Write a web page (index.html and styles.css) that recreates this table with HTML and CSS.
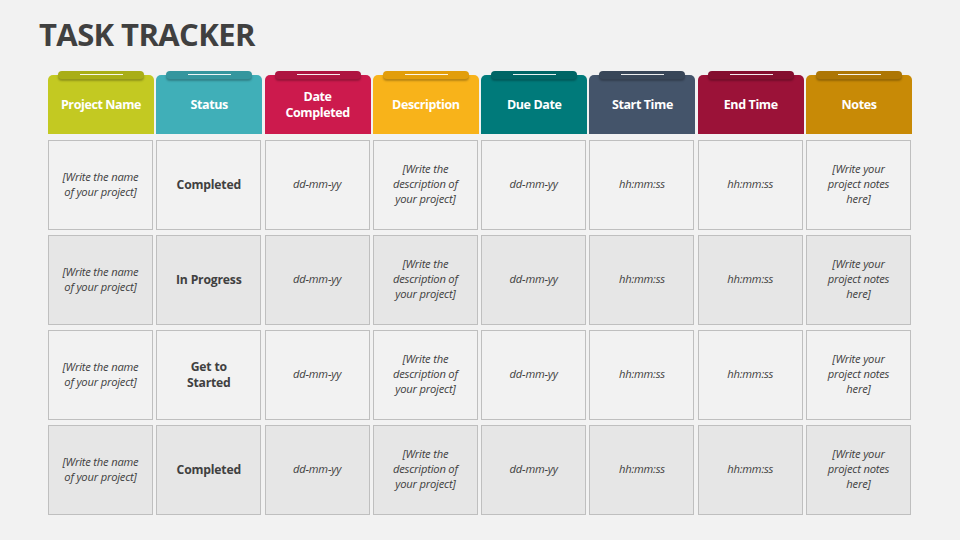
FILE: index.html
```html
<!DOCTYPE html>
<html>
<head>
<meta charset="utf-8">
<link rel="stylesheet" href="styles.css">
</head>
<body>
<h1 class="title">TASK TRACKER</h1>
<div class="table">
  <div class="head c1"><span class="tab"></span>Project Name</div>
  <div class="head c2"><span class="tab"></span>Status</div>
  <div class="head c3"><span class="tab"></span>Date<br>Completed</div>
  <div class="head c4"><span class="tab"></span>Description</div>
  <div class="head c5"><span class="tab"></span>Due Date</div>
  <div class="head c6"><span class="tab"></span>Start Time</div>
  <div class="head c7"><span class="tab"></span>End Time</div>
  <div class="head c8"><span class="tab"></span>Notes</div>

  <div class="cell">[Write the name<br>of your project]</div>
  <div class="cell status">Completed</div>
  <div class="cell">dd-mm-yy</div>
  <div class="cell">[Write the<br>description of<br>your project]</div>
  <div class="cell">dd-mm-yy</div>
  <div class="cell">hh:mm:ss</div>
  <div class="cell">hh:mm:ss</div>
  <div class="cell">[Write your<br>project notes<br>here]</div>

  <div class="cell alt">[Write the name<br>of your project]</div>
  <div class="cell alt status">In Progress</div>
  <div class="cell alt">dd-mm-yy</div>
  <div class="cell alt">[Write the<br>description of<br>your project]</div>
  <div class="cell alt">dd-mm-yy</div>
  <div class="cell alt">hh:mm:ss</div>
  <div class="cell alt">hh:mm:ss</div>
  <div class="cell alt">[Write your<br>project notes<br>here]</div>

  <div class="cell">[Write the name<br>of your project]</div>
  <div class="cell status">Get to<br>Started</div>
  <div class="cell">dd-mm-yy</div>
  <div class="cell">[Write the<br>description of<br>your project]</div>
  <div class="cell">dd-mm-yy</div>
  <div class="cell">hh:mm:ss</div>
  <div class="cell">hh:mm:ss</div>
  <div class="cell">[Write your<br>project notes<br>here]</div>

  <div class="cell alt">[Write the name<br>of your project]</div>
  <div class="cell alt status">Completed</div>
  <div class="cell alt">dd-mm-yy</div>
  <div class="cell alt">[Write the<br>description of<br>your project]</div>
  <div class="cell alt">dd-mm-yy</div>
  <div class="cell alt">hh:mm:ss</div>
  <div class="cell alt">hh:mm:ss</div>
  <div class="cell alt">[Write your<br>project notes<br>here]</div>
</div>
</body>
</html>
```
FILE: styles.css
```css
html, body {
  margin: 0;
  padding: 0;
  background: #f2f2f2;
  width: 960px;
  height: 540px;
  overflow: hidden;
  font-family: "Open Sans", "Lato", sans-serif;
}
.title {
  margin: 0;
  padding: 14px 0 0 39px;
  height: 57px;
  box-sizing: border-box;
  font-size: 31px;
  line-height: 40px;
  font-weight: 700;
  color: #404040;
  letter-spacing: -0.6px;
}
.table {
  margin: 18px 0 0 48px;
  width: 864px;
  display: grid;
  grid-template-columns: repeat(8, 1fr);
  grid-template-rows: 60px repeat(4, 90px);
  column-gap: 2.3px;
  row-gap: 5px;
}
.head {
  position: relative;
  border-radius: 5px 5px 0 0;
  color: #fff;
  font-weight: 700;
  font-size: 12.5px;
  line-height: 16px;
  letter-spacing: -0.4px;
  display: flex;
  align-items: center;
  justify-content: center;
  text-align: center;
  margin-bottom: 1px;
}
.tab {
  position: absolute;
  left: 10px;
  right: 10px;
  top: -4px;
  height: 8px;
  border-radius: 4px;
  box-shadow: 0 2px 2px rgba(0,0,0,0.25);
}
.tab::after {
  content: "";
  position: absolute;
  left: 22px;
  right: 21px;
  top: 3px;
  height: 1px;
  background: rgba(255,255,255,0.9);
}
.c1 { background: #c3c922; } .c1 .tab { background: #a9ae17; }
.c2 { background: #40afb8; } .c2 .tab { background: #35969e; }
.c3 { background: #cc1a4d; } .c3 .tab { background: #ae1441; }
.c4 { background: #f8b31a; } .c4 .tab { background: #e29e0b; }
.c5 { background: #007a7a; } .c5 .tab { background: #006565; }
.c6 { background: #44546a; } .c6 .tab { background: #384658; }
.c7 { background: #9b1238; } .c7 .tab { background: #840e2f; }
.c8 { background: #c88a06; } .c8 .tab { background: #ad7604; }

.cell {
  box-sizing: border-box;
  border: 1px solid #bfbfbf;
  background: #f2f2f2;
  width: 105px;
  display: flex;
  align-items: center;
  justify-content: center;
  text-align: center;
  font-style: italic;
  font-size: 11.2px;
  line-height: 15px;
  color: #404040;
  letter-spacing: -0.2px;
  padding-bottom: 3px;
}
.cell.alt { background: #e6e6e6; }
.cell.status {
  font-style: normal;
  font-weight: 700;
  font-size: 12.2px;
  line-height: 16px;
  letter-spacing: -0.2px;
  padding-bottom: 0;
}
```
